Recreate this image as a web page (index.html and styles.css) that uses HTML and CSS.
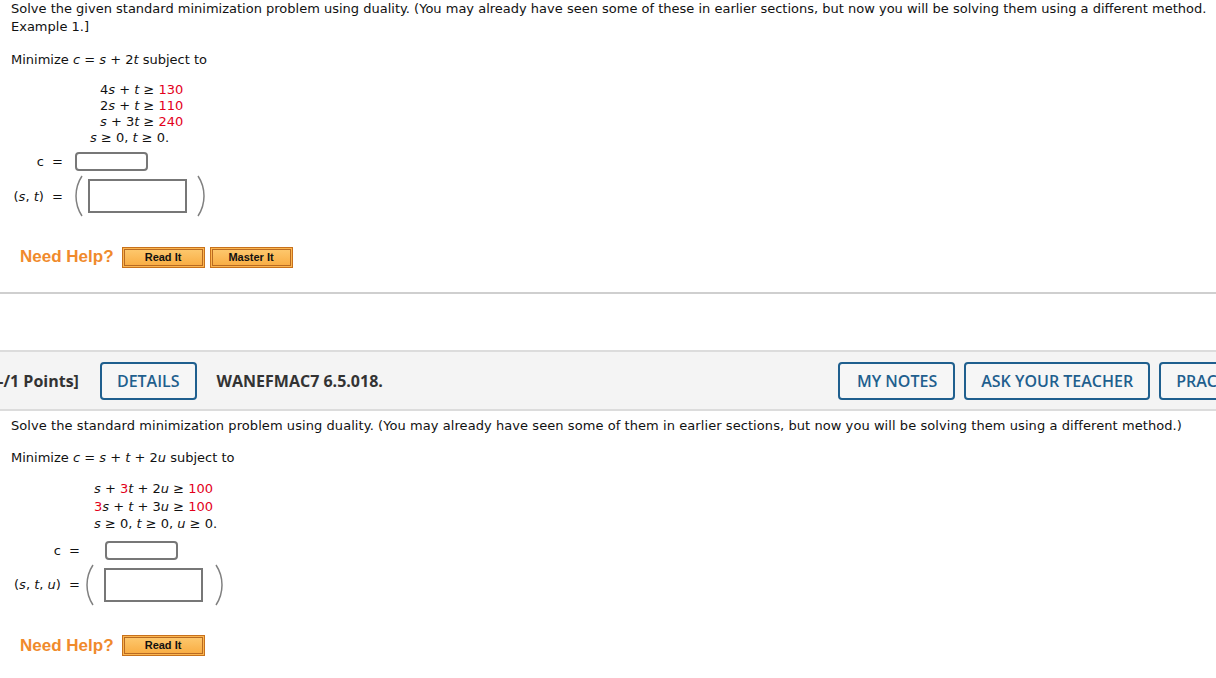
FILE: index.html
```html
<!DOCTYPE html>
<html>
<head>
<meta charset="utf-8">
<link rel="stylesheet" href="styles.css">
</head>
<body>
<div class="page">
  <section class="question">
    <p class="intro">Solve the given standard minimization problem using duality. (You may already have seen some of these in earlier sections, but now you will be solving them using a different method. Example 1.]</p>
    <p class="stmt">Minimize <i>c</i> = <i>s</i> + 2<i>t</i> subject to</p>
    <div class="constraints c1">
      <div class="row">4<i>s</i> + <i>t</i> ≥ <span class="red">130</span></div>
      <div class="row">2<i>s</i> + <i>t</i> ≥ <span class="red">110</span></div>
      <div class="row"><i>s</i> + 3<i>t</i> ≥ <span class="red">240</span></div>
      <div class="row last"><i>s</i> ≥ 0, <i>t</i> ≥ 0.</div>
    </div>
    <div class="answers a1">
      <div class="label">c&nbsp; =</div>
      <div class="value"><span class="small-box"></span></div>
      <div class="label tall">(<i>s</i>, <i>t</i>)&nbsp; =</div>
      <div class="value tuple">
        <svg class="paren" width="8" height="42" viewBox="0 0 8 42"><path d="M7 1 Q1 10 1 21 Q1 32 7 41" fill="none" stroke="#808080" stroke-width="1.5"/></svg>
        <span class="big-box"></span>
        <svg class="paren" width="8" height="42" viewBox="0 0 8 42"><path d="M1 1 Q7 10 7 21 Q7 32 1 41" fill="none" stroke="#808080" stroke-width="1.5"/></svg>
      </div>
    </div>
    <div class="help">
      <span class="need">Need Help?</span>
      <span class="hbtn"><span>Read It</span></span>
      <span class="hbtn"><span>Master It</span></span>
    </div>
  </section>
  <div class="divider"></div>
  <section class="question q2">
    <div class="qhead">
      <span class="points">[-/1 Points]</span>
      <span class="obtn">DETAILS</span>
      <span class="code">WANEFMAC7 6.5.018.</span>
      <div class="tools">
        <span class="obtn wide">MY NOTES</span>
        <span class="obtn">ASK YOUR TEACHER</span>
        <span class="obtn">PRACTICE ANOTHER</span>
      </div>
    </div>
    <p class="intro2">Solve the standard minimization problem using duality. (You may already have seen some of them in earlier sections, but now you will be solving them using a different method.)</p>
    <p class="stmt s2">Minimize <i>c</i> = <i>s</i> + <i>t</i> + 2<i>u</i> subject to</p>
    <div class="constraints c2">
      <div class="row"><i>s</i> + <span class="red">3</span><i>t</i> + 2<i>u</i> ≥ <span class="red">100</span></div>
      <div class="row"><span class="red">3</span><i>s</i> + <i>t</i> + 3<i>u</i> ≥ <span class="red">100</span></div>
      <div class="row"><i>s</i> ≥ 0, <i>t</i> ≥ 0, <i>u</i> ≥ 0.</div>
    </div>
    <div class="answers a2">
      <div class="label">c&nbsp; =</div>
      <div class="value"><span class="small-box shift"></span></div>
      <div class="label tall">(<i>s</i>, <i>t</i>, <i>u</i>)&nbsp; =</div>
      <div class="value tuple">
        <svg class="paren" width="8" height="42" viewBox="0 0 8 42"><path d="M7 1 Q1 10 1 21 Q1 32 7 41" fill="none" stroke="#808080" stroke-width="1.5"/></svg>
        <span class="big-box"></span>
        <svg class="paren" width="8" height="42" viewBox="0 0 8 42"><path d="M1 1 Q7 10 7 21 Q7 32 1 41" fill="none" stroke="#808080" stroke-width="1.5"/></svg>
      </div>
    </div>
    <div class="help h2">
      <span class="need">Need Help?</span>
      <span class="hbtn"><span>Read It</span></span>
    </div>
  </section>
</div>
</body>
</html>
```

FILE: styles.css
```css
html, body {
  margin: 0;
  padding: 0;
  background: #fff;
  overflow: hidden;
}
body {
  font-family: "DejaVu Sans", Verdana, sans-serif;
  font-size: 13px;
  color: #111;
}
.page {
  width: 1357px;
}
.question {
  padding-left: 11px;
}
p { margin: 0; }
.intro {
  line-height: 18px;
  width: 1204px;
}
.stmt {
  margin-top: 15px;
  line-height: 18px;
}
.red { color: #e3001b; }
.constraints {
  margin-top: 13px;
  line-height: 16px;
}
.c1 .row { padding-left: 89px; }
.c1 .row.last { padding-left: 79px; }
.answers {
  display: grid;
  grid-template-columns: 52px auto;
  column-gap: 12px;
  row-gap: 4px;
  align-items: center;
  justify-content: start;
}
.a1 { margin-top: 6px; }
.label {
  text-align: right;
  white-space: nowrap;
}
.value { display: flex; align-items: center; }
.small-box {
  display: block;
  width: 69px;
  height: 15px;
  border: 2px solid #777;
  border-radius: 4px;
}
.tuple { gap: 5px; }
.paren { display: block; }
.big-box {
  display: block;
  width: 95px;
  height: 30px;
  border: 2px solid #777;
  margin-right: 5px;
}
.help {
  display: flex;
  align-items: center;
  margin-top: 30px;
  padding-left: 9px;
  height: 20px;
}
.need {
  font-family: "Liberation Sans", Arial, sans-serif;
  font-weight: bold;
  font-size: 17px;
  color: #f08a2c;
  margin-right: 8px;
}
.hbtn {
  display: block;
  width: 79px;
  height: 17px;
  border: 1px solid #c8711c;
  background: #fbb650;
  padding: 1px;
  box-sizing: content-box;
  margin-right: 5px;
}
.hbtn span {
  display: block;
  height: 15px;
  border: 1px solid #b86a22;
  background: linear-gradient(#fdc76c, #f9ae45);
  text-align: center;
  font-family: "Liberation Sans", Arial, sans-serif;
  font-weight: bold;
  font-size: 11px;
  line-height: 15px;
  color: #111;
}
.divider {
  height: 2px;
  background: #cfcfcf;
  margin-top: 25px;
}
.q2 { padding-left: 0; margin-top: 56px; }
.qhead {
  display: flex;
  align-items: center;
  background: #f4f4f4;
  border-top: 2px solid #dcdcdc;
  border-bottom: 2px solid #dcdcdc;
  height: 57px;
  padding-right: 10px;
  font-family: "Open Sans", sans-serif;
}
.points {
  font-weight: bold;
  font-size: 16px;
  color: #333;
  margin-left: -7px;
  margin-right: 21px;
}
.obtn {
  display: flex;
  align-items: center;
  justify-content: center;
  height: 34px;
  padding: 0 15px;
  border: 2px solid #1f5f8e;
  border-radius: 4px;
  color: #1f5f8e;
  font-weight: 600;
  font-size: 16px;
  background: #f6f6f6;
}
.obtn.wide { padding: 0 16px 0 17px; }
.code {
  font-weight: bold;
  font-size: 16px;
  color: #333;
  margin-left: 20px;
}
.tools {
  margin-left: auto;
  display: flex;
  gap: 9px;
}
.intro2 {
  padding-left: 11px;
  margin-top: 6px;
  line-height: 18px;
  letter-spacing: 0.07px;
}
.s2 { padding-left: 11px; margin-top: 14px; }
.c2 { margin-top: 13px; line-height: 17.5px; padding-left: 94px; }
.a2 {
  margin-top: 8px;
  padding-left: 11px;
  grid-template-columns: 69px auto;
  column-gap: 6px;
}
.a2 .shift { margin-left: 19px; }
.a2 .big-box { margin-left: 5px; margin-right: 7px; }
.h2 { padding-left: 20px; margin-top: 30px; }
```
